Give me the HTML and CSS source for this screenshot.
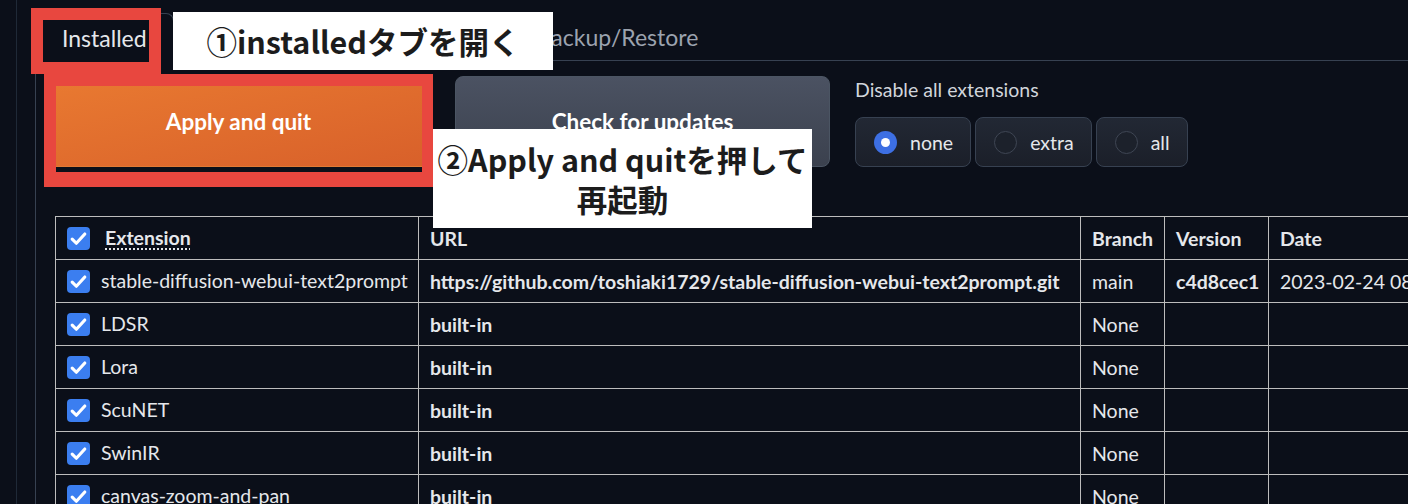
FILE: index.html
```html
<!DOCTYPE html>
<html lang="ja">
<head>
  <meta charset="UTF-8" />
  <meta name="viewport" content="width=device-width, initial-scale=1.0"/>
  <title>Extensions</title>
  <link rel="stylesheet" href="styles.css">
</head>
<body>

<div class="app">
  <div class="tabs">
    <div class="tab-nav">
      <button class="tab selected">Installed</button>
      <button class="tab">Available</button>
      <button class="tab">Install from URL</button>
      <button class="tab">Backup/Restore</button>
    </div>

    <div class="tab-panel">
      <div class="controls">
        <button class="btn primary">Apply and quit</button>
        <button class="btn secondary">Check for updates</button>
        <div class="radio-block">
          <span class="radio-label">Disable all extensions</span>
          <div class="radio-group">
            <label class="radio-item"><span class="radio checked"></span>none</label>
            <label class="radio-item"><span class="radio"></span>extra</label>
            <label class="radio-item"><span class="radio"></span>all</label>
          </div>
        </div>
      </div>

      <table class="ext-table">
        <colgroup>
          <col style="width: 363px">
          <col style="width: 662px">
          <col style="width: 84px">
          <col style="width: 104px">
          <col style="width: 220px">
        </colgroup>
        <thead>
          <tr>
            <th><span class="check"></span><abbr class="head-name">Extension</abbr></th>
            <th>URL</th>
            <th>Branch</th>
            <th>Version</th>
            <th>Date</th>
          </tr>
        </thead>
        <tbody>
          <tr>
            <td><span class="check"></span>stable-diffusion-webui-text2prompt</td>
            <td class="strong">https://github.com/toshiaki1729/stable-diffusion-webui-text2prompt.git</td>
            <td>main</td>
            <td class="strong">c4d8cec1</td>
            <td>2023-02-24 08:23:51</td>
          </tr>
          <tr>
            <td><span class="check"></span>LDSR</td>
            <td class="strong">built-in</td>
            <td>None</td>
            <td></td>
            <td></td>
          </tr>
          <tr>
            <td><span class="check"></span>Lora</td>
            <td class="strong">built-in</td>
            <td>None</td>
            <td></td>
            <td></td>
          </tr>
          <tr>
            <td><span class="check"></span>ScuNET</td>
            <td class="strong">built-in</td>
            <td>None</td>
            <td></td>
            <td></td>
          </tr>
          <tr>
            <td><span class="check"></span>SwinIR</td>
            <td class="strong">built-in</td>
            <td>None</td>
            <td></td>
            <td></td>
          </tr>
          <tr>
            <td><span class="check"></span>canvas-zoom-and-pan</td>
            <td class="strong">built-in</td>
            <td>None</td>
            <td></td>
            <td></td>
          </tr>
        </tbody>
      </table>
    </div>
  </div>

  <!-- annotations drawn over the screenshot -->
  <div class="mark mark-tab"></div>
  <div class="mark mark-apply"></div>
  <div class="note note-tab">①installedタブを開く</div>
  <div class="note note-apply">②Apply and quitを押して<br>再起動</div>
</div>

</body>
</html>
```

FILE: styles.css
```css
body {
  font-family: "Lato", "Noto Sans CJK JP", sans-serif;
  margin: 0;
  padding: 0;
  background-color: #0b0f19;
  color: #e5e7eb;
  overflow: hidden;
}
.app {
  position: relative;
  margin-left: 16px;
  padding-left: 18px;
  border-left: 1px solid #1f2937;
  min-height: 504px;
}
.tab-nav {
  display: flex;
  padding-top: 13px;
  border-bottom: 1px solid #374151;
}
.tab {
  font-family: inherit;
  font-size: 23px;
  color: #9ca3af;
  background: none;
  border: 1px solid transparent;
  border-bottom: none;
  height: 47px;
  padding: 0 21px;
  margin-bottom: -1px;
  cursor: pointer;
}
.tab.selected {
  color: #e5e7eb;
  background-color: #0b0f19;
  border-color: #374151;
  border-radius: 8px 8px 0 0;
  height: 48px;
  padding: 0 26px;
}
.tab-panel {
  border-left: 1px solid #374151;
  padding: 15px 0 0 9px;
}
.controls {
  display: flex;
  align-items: flex-start;
}
.btn {
  font-family: inherit;
  font-size: 22.5px;
  font-weight: 700;
  color: white;
  height: 91px;
  border-radius: 8px;
  cursor: pointer;
}
.btn.primary {
  width: 387px;
  border: 1px solid #e07a35;
  background: linear-gradient(to bottom right, #e97a31, #d8602a);
}
.btn.secondary {
  width: 375px;
  margin-left: 23px;
  border: 1px solid #4b5563;
  background: linear-gradient(to bottom, #4b5262, #3b414e);
}
.radio-block {
  margin-left: 25px;
  display: flex;
  flex-direction: column;
  padding-top: 3px;
}
.radio-label {
  font-size: 19.5px;
  color: #d1d5db;
  line-height: 22px;
}
.radio-group {
  display: flex;
  gap: 4px;
  margin-top: 16px;
}
.radio-item {
  display: flex;
  align-items: center;
  gap: 13px;
  height: 50px;
  box-sizing: border-box;
  padding: 0 17px 0 18px;
  border: 1px solid #374151;
  border-radius: 8px;
  background: linear-gradient(to bottom, #222834, #1b1f29);
  font-size: 19.5px;
  color: #e5e7eb;
}
.radio {
  width: 23px;
  height: 23px;
  box-sizing: border-box;
  border-radius: 50%;
  border: 1.5px solid #3f4654;
  background-color: #1c212b;
  display: flex;
  align-items: center;
  justify-content: center;
}
.radio.checked {
  border: none;
  background-color: #3d6fe3;
}
.radio.checked::after {
  content: "";
  width: 9px;
  height: 9px;
  border-radius: 50%;
  background: white;
}
.ext-table {
  margin: 49px 0 0 10px;
  border-collapse: collapse;
  table-layout: fixed;
  width: 1433px;
  font-size: 19.5px;
}
.ext-table th, .ext-table td {
  border: 1px solid #bdbdbd;
  height: 42px;
  padding: 0 11px;
  text-align: left;
  white-space: nowrap;
  overflow: hidden;
}
.ext-table th {
  font-weight: 700;
}
.ext-table td.strong {
  font-weight: 700;
}
.head-name {
  text-decoration: underline dotted;
  text-underline-offset: 4px;
  margin-left: 4px;
}
.check {
  display: inline-block;
  vertical-align: middle;
  width: 23px;
  height: 23px;
  margin: -3px 11px 0 0;
  border-radius: 4px;
  background-color: #3b7ef0;
  background-image: url("data:image/svg+xml,%3Csvg xmlns='http://www.w3.org/2000/svg' viewBox='0 0 16 16'%3E%3Cpath d='M3.6 8.4l2.9 2.9 5.9-6.4' fill='none' stroke='white' stroke-width='2.2' stroke-linecap='round' stroke-linejoin='round'/%3E%3C/svg%3E");
  background-size: 100% 100%;
}
.mark {
  position: absolute;
  box-sizing: border-box;
  border: 12px solid #e8473f;
}
.mark-tab {
  left: 14px;
  top: 8px;
  width: 130px;
  height: 66px;
}
.mark-apply {
  left: 27px;
  top: 74px;
  width: 389px;
  height: 113px;
  border-right-width: 11px;
  border-bottom-width: 15px;
}
.note {
  position: absolute;
  background: white;
  color: #1c1c1c;
  font-family: "Noto Sans CJK JP", sans-serif;
  font-weight: 700;
  font-size: 30.5px;
  text-align: center;
  white-space: nowrap;
}
.note-tab {
  left: 156px;
  top: 12px;
  width: 380px;
  height: 58px;
  line-height: 58px;
}
.note-apply {
  left: 416px;
  top: 129px;
  width: 379px;
  height: 99px;
  box-sizing: border-box;
  padding-top: 10px;
  line-height: 40px;
}
```
